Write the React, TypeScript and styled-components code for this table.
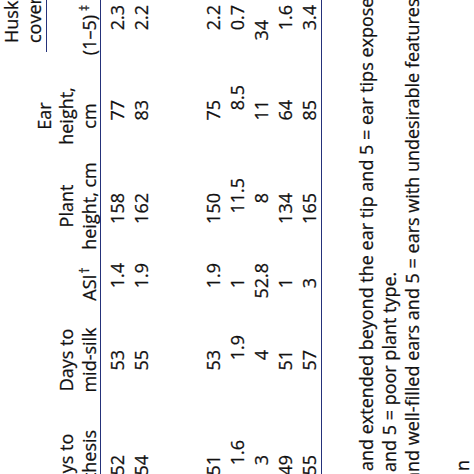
import React from "react";
import styled, { createGlobalStyle } from "styled-components";

const GlobalStyle = createGlobalStyle`
  html, body {
    margin: 0;
    padding: 0;
    background: #ffffff;
  }
  body {
    font-family: "Open Sans", "Noto Sans", sans-serif;
    color: #121111;
  }
`;

const RULE = "#25327a";
const TEMPLATE = "106px 104px 48px 108px 72px 104px";

const Sup = styled.sup<{ $gap?: number }>`
  font-size: 12px;
  line-height: 0;
  vertical-align: 7px;
  margin-left: ${(p) => p.$gap ?? 1}px;
`;

type Column = {
  key: string;
  head: React.ReactNode[];
  shift: number;
  spanner?: string[];
};

const columns: Column[] = [
  { key: "anthesis", head: ["Days to", "anthesis"], shift: 10 },
  { key: "silk", head: ["Days to", "mid-silk"], shift: 10 },
  { key: "asi", head: [<>ASI<Sup>†</Sup></>], shift: 6 },
  { key: "plant", head: ["Plant", "height, cm"], shift: 13 },
  { key: "ear", head: ["Ear", "height,", "cm"], shift: 16 },
  { key: "husk", head: [<>(1–5)<Sup $gap={4}>‡</Sup></>], shift: 8, spanner: ["Husk", "cover"] },
];

const rows: (string[] | null)[] = [
  ["52", "53", "1.4", "158", "77", "2.3"],
  ["54", "55", "1.9", "162", "83", "2.2"],
  null,
  null,
  ["51", "53", "1.9", "150", "75", "2.2"],
  ["1.6", "1.9", "1", "11.5", "8.5", "0.7"],
  ["3", "4", "52.8", "8", "11", "34"],
  ["49", "51", "1", "134", "64", "1.6"],
  ["55", "57", "3", "165", "85", "3.4"],
];

const notes = [
  { indent: 3, text: "and extended beyond the ear tip and 5 = ear tips exposed." },
  { indent: 2, text: "and 5 = poor plant type." },
  { indent: -8, text: "and well-filled ears and 5 = ears with undesirable features." },
];

function Num({ value, shift }: { value: string; shift: number }) {
  const [int, frac] = value.split(".");
  return (
    <NumCell $shift={shift}>
      <Int>{int}</Int>
      <Frac>{frac !== undefined ? "." + frac : ""}</Frac>
    </NumCell>
  );
}

export default function App() {
  return (
    <>
      <GlobalStyle />
      <Frame>
        <Sheet>
          <Table>
            <Head>
              {columns.map((c) =>
                c.spanner ? (
                  <SpannerCell key={c.key}>
                    <Spanner>
                      {c.spanner.map((s) => (
                        <div key={s}>{s}</div>
                      ))}
                    </Spanner>
                    <HeadLines>
                      {c.head.map((h, i) => (
                        <div key={i}>{h}</div>
                      ))}
                    </HeadLines>
                  </SpannerCell>
                ) : (
                  <HeadCell key={c.key}>
                    {c.head.map((h, i) => (
                      <div key={i}>{h}</div>
                    ))}
                  </HeadCell>
                )
              )}
            </Head>
            <Body>
              {rows.map((r, ri) =>
                columns.map((c, ci) =>
                  r ? (
                    <Num key={ri + "-" + c.key} value={r[ci]} shift={c.shift} />
                  ) : (
                    <Blank key={ri + "-" + c.key} />
                  )
                )
              )}
            </Body>
          </Table>
          <Notes>
            {notes.map((n) => (
              <NoteLine key={n.text} $indent={n.indent}>
                {n.text}
              </NoteLine>
            ))}
            <NoteLine $indent={3} $gap={27}>
              n
            </NoteLine>
          </Notes>
        </Sheet>
      </Frame>
    </>
  );
}

const Frame = styled.div`
  width: 474px;
  height: 474px;
  overflow: hidden;
  background: #ffffff;
`;

const Sheet = styled.div`
  width: 474px;
  height: 474px;
  overflow: hidden;
  transform: rotate(-90deg);
  font-size: 18px;
  -webkit-text-stroke: 0.25px #121111;
`;

const Table = styled.div`
  width: 542px;
  margin-left: -44px;
`;

const Head = styled.div`
  display: grid;
  grid-template-columns: ${TEMPLATE};
  height: 100px;
  border-bottom: 1.5px solid ${RULE};
`;

const HeadCell = styled.div`
  display: flex;
  flex-direction: column;
  justify-content: flex-end;
  align-items: center;
  line-height: 22.5px;
  white-space: nowrap;
`;

const SpannerCell = styled.div`
  display: flex;
  flex-direction: column;
  justify-content: space-between;
  line-height: 22.5px;
  white-space: nowrap;
`;

const Spanner = styled.div`
  margin-left: 28px;
  margin-right: -40px;
  padding-left: 9px;
  line-height: 23px;
  border-bottom: 1.5px solid ${RULE};
`;

const HeadLines = styled.div`
  display: flex;
  flex-direction: column;
  align-items: center;
  padding-right: 4px;
`;

const Body = styled.div`
  display: grid;
  grid-template-columns: ${TEMPLATE};
  grid-auto-rows: 24px;
  padding-top: 3.5px;
  border-bottom: 1.5px solid ${RULE};
  line-height: 24px;
`;

const Blank = styled.div``;

const NumCell = styled.div<{ $shift: number }>`
  display: grid;
  grid-template-columns: calc(50% + ${(p) => p.$shift}px) 1fr;
  white-space: nowrap;
`;

const Int = styled.span`
  text-align: right;
`;

const Frac = styled.span`
  text-align: left;
`;

const Notes = styled.div`
  margin-top: 33px;
  line-height: 23px;
`;

const NoteLine = styled.div<{ $indent: number; $gap?: number }>`
  white-space: nowrap;
  margin-left: ${(p) => p.$indent}px;
  margin-top: ${(p) => p.$gap ?? 0}px;
`;
